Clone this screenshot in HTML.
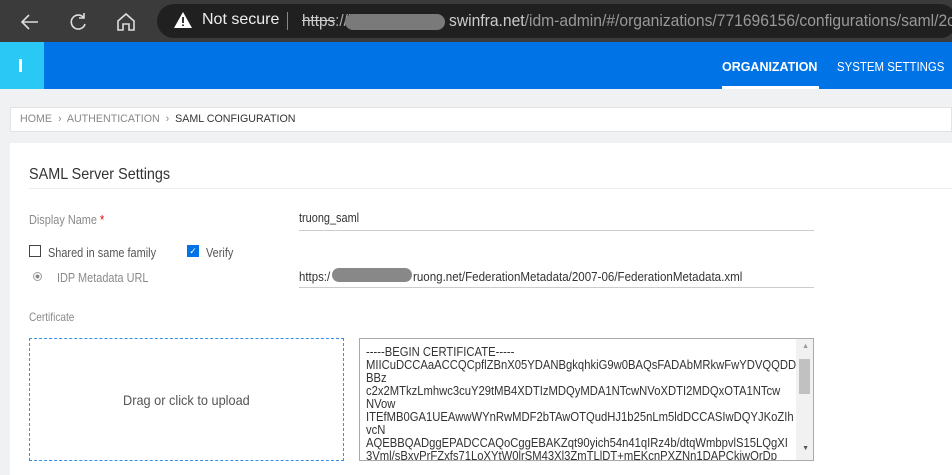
<!DOCTYPE html>
<html><head><style>
*{margin:0;padding:0;box-sizing:border-box}
body{width:952px;height:475px;overflow:hidden;background:#f0f1f3;font-family:"Liberation Sans",sans-serif;position:relative}
.abs{position:absolute;white-space:nowrap}
.n{transform:scaleX(.84);transform-origin:0 0}
.bar{left:0;top:0;width:952px;height:42px;background:#3b3b3b}
.url{left:157px;top:4px;width:800px;height:34px;background:#202020;border-radius:17px}
.hdr{left:0;top:42px;width:952px;height:47px;background:#0073e7}
.cyan{left:0;top:42px;width:44px;height:47px;background:#29c8f5}
.lbl{color:#8a8a8a;font-size:13px}
.txt{color:#333;font-size:13px}
.line{height:1px;background:#ccc}
.cert{font-size:12.5px;color:#333;line-height:13px;white-space:pre}
</style></head><body>
<div class="abs bar"></div>
<div class="abs url"></div>
<svg class="abs" style="left:18px;top:10px" width="24" height="24" viewBox="0 0 24 24"><path d="M20 12H5M11 5l-7 7 7 7" stroke="#ddd" stroke-width="1.6" fill="none"/></svg>
<svg class="abs" style="left:66px;top:10px" width="24" height="24" viewBox="0 0 24 24"><path d="M18 8A7 7 0 1 0 19 14M18 3v5h-5" stroke="#ddd" stroke-width="1.6" fill="none"/></svg>
<svg class="abs" style="left:114px;top:10px" width="24" height="24" viewBox="0 0 24 24"><path d="M4 11l8-7 8 7v9h-5v-6h-6v6H4z" stroke="#ddd" stroke-width="1.6" fill="none"/></svg>
<svg class="abs" style="left:174px;top:12px" width="18" height="16" viewBox="0 0 18 16"><path d="M9 0L18 16H0z" fill="#fff"/><path d="M9 5v6M9 12.5v1.5" stroke="#202020" stroke-width="1.8"/></svg>
<div class="abs" style="left:202px;top:11px;font-size:16px;color:#eee">Not secure</div>
<div class="abs" style="left:287px;top:12px;width:1px;height:18px;background:#888"></div>
<div class="abs n" style="left:302px;top:11px;font-size:17px;color:#aaa;transform:scaleX(.9)"><span style="color:#ccc;text-decoration:line-through">https</span>://l</div>
<div class="abs n" style="left:449px;top:11px;font-size:17px;color:#ccc;transform:scaleX(.92)">swinfra.net<span style="color:#999">/idm-admin/#/organizations/771696156/configurations/saml/2c</span></div>
<div class="abs" style="left:345px;top:14px;width:100px;height:16px;background:#7a7a7a;border-radius:8px"></div>
<div class="abs hdr"></div>
<div class="abs cyan"></div>
<div class="abs" style="left:19px;top:59px;width:3px;height:13px;background:#fff"></div>
<div class="abs n" style="left:722px;top:59px;color:#fff;font-weight:bold;font-size:13px;transform:scaleX(.96)">ORGANIZATION</div>
<div class="abs" style="left:722px;top:86px;width:97px;height:3px;background:#fff"></div>
<div class="abs n" style="left:837px;top:59px;color:#fff;font-size:13px;transform:scaleX(.88)">SYSTEM SETTINGS</div>
<div class="abs" style="left:10px;top:107px;width:942px;height:25px;background:#fff;border:1px solid #e3e3e3"></div>
<div class="abs n" style="left:20px;top:113px;font-size:11px;color:#888;transform:scaleX(.97)">HOME &nbsp;›&nbsp; AUTHENTICATION &nbsp;›&nbsp; <span style="color:#333">SAML CONFIGURATION</span></div>
<div class="abs" style="left:10px;top:143px;width:942px;height:332px;background:#fff"></div>
<div class="abs n" style="left:29px;top:166px;font-size:16px;color:#333;transform:scaleX(.9)">SAML Server Settings</div>
<div class="abs line" style="left:29px;top:188px;width:923px;background:#eee"></div>
<div class="abs lbl n" style="left:29px;top:212px">Display Name <span style="color:#d00">*</span></div>
<div class="abs txt n" style="left:299px;top:210px">truong_saml</div>
<div class="abs line" style="left:299px;top:230px;width:515px"></div>
<div class="abs" style="left:29px;top:245px;width:12px;height:12px;border:1.5px solid #444"></div>
<div class="abs txt n" style="left:48px;top:245px;color:#555">Shared in same family</div>
<div class="abs" style="left:187px;top:245px;width:12px;height:12px;background:#0073e7;color:#fff;font-size:9px;line-height:12px;text-align:center">✓</div>
<div class="abs txt n" style="left:206px;top:245px;color:#555">Verify</div>
<div class="abs" style="left:33px;top:272px;width:9px;height:9px;border-radius:50%;border:1px solid #999;background:radial-gradient(#888 35%,#fff 45%)"></div>
<div class="abs lbl n" style="left:57px;top:270px">IDP Metadata URL</div>
<div class="abs txt n" style="left:299px;top:269px;transform:scaleX(.88)">https:/</div>
<div class="abs txt n" style="left:413px;top:269px;transform:scaleX(.89)">ruong.net/FederationMetadata/2007-06/FederationMetadata.xml</div>
<div class="abs" style="left:332px;top:268px;width:80px;height:14px;background:#888;border-radius:7px"></div>
<div class="abs line" style="left:299px;top:287px;width:515px"></div>
<div class="abs lbl n" style="left:29px;top:310px;font-size:12px">Certificate</div>
<div class="abs" style="left:29px;top:338px;width:315px;height:123px;border:1px dashed #3a8ee6"></div>
<div class="abs n" style="left:123px;top:392px;font-size:14px;color:#555;transform:scaleX(.91)">Drag or click to upload</div>
<div class="abs" style="left:359px;top:338px;width:455px;height:123px;border:1px solid #aaa;overflow:hidden;background:#fff">
<div class="cert" style="position:absolute;left:6px;top:7px;transform:scaleX(.9);transform-origin:0 0">-----BEGIN CERTIFICATE-----
MIICuDCCAaACCQCpflZBnX05YDANBgkqhkiG9w0BAQsFADAbMRkwFwYDVQQDD
BBz
c2x2MTkzLmhwc3cuY29tMB4XDTIzMDQyMDA1NTcwNVoXDTI2MDQxOTA1NTcw
NVow
ITEfMB0GA1UEAwwWYnRwMDF2bTAwOTQudHJ1b25nLm5ldDCCASIwDQYJKoZIh
vcN
AQEBBQADggEPADCCAQoCggEBAKZqt90yich54n41qIRz4b/dtqWmbpvlS15LQgXI
3Vml/sBxvPrFZxfs71LoXYtW0lrSM43Xl3ZmTLlDT+mEKcnPXZNn1DAPCkiwOrDp</div>
<div style="position:absolute;right:0;top:0;width:17px;height:123px;background:#f1f1f1"></div>
<div style="position:absolute;right:3px;top:20px;width:11px;height:35px;background:#c1c1c1"></div>
<div style="position:absolute;right:4px;top:4px;font-size:7px;color:#999">▲</div>
<div style="position:absolute;right:4px;top:106px;font-size:7px;color:#555">▼</div>
</div>
</body></html>
